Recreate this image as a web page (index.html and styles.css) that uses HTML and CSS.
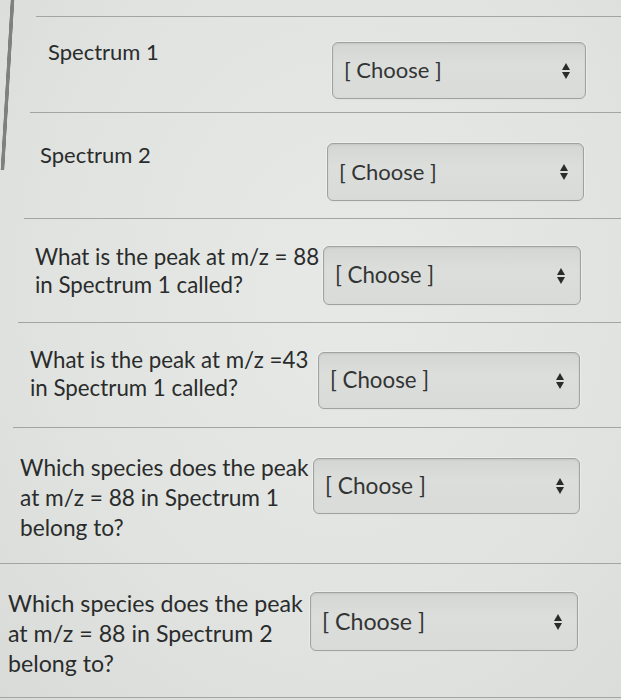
FILE: index.html
```html
<!DOCTYPE html>
<html lang="en">
<head>
<meta charset="utf-8">
<title>Matching</title>
<link rel="stylesheet" href="styles.css">
</head>
<body>
<div class="quiz">
  <div class="row r1">
    <div class="label">Spectrum 1</div>
    <div class="select"><span class="choose">[ Choose ]</span><span class="arrows"><i class="up"></i><i class="down"></i></span></div>
  </div>
  <div class="row r2">
    <div class="label">Spectrum 2</div>
    <div class="select"><span class="choose">[ Choose ]</span><span class="arrows"><i class="up"></i><i class="down"></i></span></div>
  </div>
  <div class="row r3">
    <div class="label">What is the peak at m/z = 88 in Spectrum 1 called?</div>
    <div class="select"><span class="choose">[ Choose ]</span><span class="arrows"><i class="up"></i><i class="down"></i></span></div>
  </div>
  <div class="row r4">
    <div class="label">What is the peak at m/z =43 in Spectrum 1 called?</div>
    <div class="select"><span class="choose">[ Choose ]</span><span class="arrows"><i class="up"></i><i class="down"></i></span></div>
  </div>
  <div class="row r5">
    <div class="label">Which species does the peak at m/z = 88 in Spectrum 1 belong to?</div>
    <div class="select"><span class="choose">[ Choose ]</span><span class="arrows"><i class="up"></i><i class="down"></i></span></div>
  </div>
  <div class="row r6">
    <div class="label">Which species does the peak at m/z = 88 in Spectrum 2 belong to?</div>
    <div class="select"><span class="choose">[ Choose ]</span><span class="arrows"><i class="up"></i><i class="down"></i></span></div>
  </div>
  <div class="end"></div>
</div>
</body>
</html>
```
FILE: styles.css
```css
html, body {
  margin: 0;
  padding: 0;
}
body {
  width: 621px;
  height: 700px;
  overflow: hidden;
  font-family: Lato, "Open Sans", sans-serif;
  color: #2a2c2c;
  background:
    linear-gradient(93.4deg, transparent 40%, #7f817f 42%, #7f817f 54%, transparent 56%) 0 0 / 16px 170px no-repeat,
    radial-gradient(ellipse at 55% 40%, #e7e9e6 0%, #e1e3e0 60%, #d9dbd8 100%);
}
.quiz {
  padding-top: 16px;
}
.row {
  display: flex;
  align-items: flex-start;
  border-top: 1px solid #a3a5a2;
  font-size: 22px;
}
.label {
  flex: 0 0 auto;
  line-height: 30px;
  padding-top: 3px;
}
.select {
  flex: 1 1 auto;
  box-sizing: border-box;
  border: 1.5px solid #a0a29f;
  border-radius: 6px;
  background: linear-gradient(180deg, #d4d6d3 0%, #dcdedb 40%, #d9dbd8 100%);
  box-shadow: inset 0 1px 2px rgba(0,0,0,0.08), 0 1px 1px rgba(0,0,0,0.06), 0 0 0 1px rgba(255,255,255,0.35);
  display: flex;
  align-items: center;
  justify-content: space-between;
  padding: 0 15px 0 11px;
  color: #333535;
}
.choose {
  padding-bottom: 2px;
}
.arrows {
  display: flex;
  flex-direction: column;
  align-items: center;
  gap: 2px;
}
.arrows i {
  display: block;
  width: 0;
  height: 0;
  border-left: 4.5px solid transparent;
  border-right: 4.5px solid transparent;
}
.arrows .up { border-bottom: 7px solid #2a2c2c; }
.arrows .down { border-top: 7px solid #2a2c2c; }

.r1 { margin-left: 36px; padding: 17px 0 13px 12px; }
.r1 .label { width: 284px; }
.r1 .select { margin: 8px 35px 0 0; height: 57px; }

.r2 { margin-left: 30px; padding: 24px 0 17px 10px; }
.r2 .label { width: 287px; }
.r2 .select { margin: 6px 37px 0 0; height: 58px; }

.r3 { margin-left: 24px; padding: 21px 0 17px 11px; font-size: 22.3px; }
.r3 .label { width: 288px; line-height: 28px; }
.r3 .select { margin: 6px 40px 0 0; height: 59px; }

.r4 { margin-left: 18px; padding: 20px 0 18px 12px; font-size: 22.3px; }
.r4 .label { width: 288px; line-height: 28px; }
.r4 .select { margin: 9px 41px 0 0; height: 57px; }

.r5 { margin-left: 13px; padding: 22px 0 20px 7px; font-size: 22.7px; }
.r5 .label { width: 293px; }
.r5 .select { margin: 8px 41px 0 0; height: 56px; }

.r6 { margin-left: 0; padding: 21px 0 19px 8px; font-size: 23.2px; }
.r6 .label { width: 302px; }
.r6 .select { margin: 7px 43px 0 0; height: 59px; }

.end {
  border-top: 1px solid #a3a5a2;
}
```
